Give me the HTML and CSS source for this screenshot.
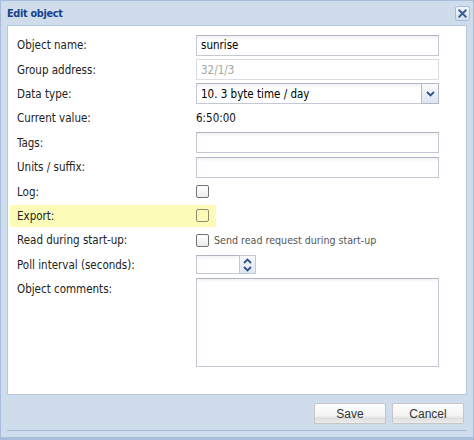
FILE: index.html
```html
<!DOCTYPE html>
<html>
<head>
<meta charset="utf-8">
<link rel="stylesheet" href="styles.css">
</head>
<body>
<div class="window">
  <div class="header">
    <span class="title">Edit object</span>
    <span class="close">
      <svg width="15" height="15" viewBox="0 0 15 15">
        <defs>
          <linearGradient id="cg" x1="0" y1="0" x2="0" y2="1">
            <stop offset="0" stop-color="#f4f8fd"/>
            <stop offset="1" stop-color="#d3e0f0"/>
          </linearGradient>
        </defs>
        <rect x="0.5" y="0.5" width="14" height="14" rx="2" fill="url(#cg)" stroke="#a3bad8"/>
        <path d="M4.2 4.2 L10.8 10.8 M10.8 4.2 L4.2 10.8" stroke="#3d5f8f" stroke-width="2" stroke-linecap="round"/>
      </svg>
    </span>
  </div>
  <div class="body">
    <div class="row">
      <span class="label">Object name:</span>
      <span class="input">sunrise</span>
    </div>
    <div class="row">
      <span class="label">Group address:</span>
      <span class="input disabled">32/1/3</span>
    </div>
    <div class="row">
      <span class="label">Data type:</span>
      <span class="input select">10. 3 byte time / day
        <span class="trigger">
          <svg width="9" height="6" viewBox="0 0 9 6"><path d="M1 1 L4.5 4.5 L8 1" fill="none" stroke="#2f5386" stroke-width="1.8"/></svg>
        </span>
      </span>
    </div>
    <div class="row">
      <span class="label">Current value:</span>
      <span class="value">6:50:00</span>
    </div>
    <div class="row">
      <span class="label">Tags:</span>
      <span class="input"></span>
    </div>
    <div class="row">
      <span class="label">Units / suffix:</span>
      <span class="input"></span>
    </div>
    <div class="row">
      <span class="label">Log:</span>
      <span class="check"></span>
    </div>
    <div class="row">
      <div class="hl">
        <span class="label">Export:</span>
        <span class="check clear"></span>
      </div>
    </div>
    <div class="row">
      <span class="label">Read during start-up:</span>
      <span class="check"></span>
      <span class="boxlabel">Send read request during start-up</span>
    </div>
    <div class="row">
      <span class="label">Poll interval (seconds):</span>
      <span class="input spin">
        <span class="spintrig">
          <svg width="9" height="16" viewBox="0 0 9 16"><path d="M1 6 L4.5 2.5 L8 6" fill="none" stroke="#2f5386" stroke-width="1.8"/><path d="M1 10 L4.5 13.5 L8 10" fill="none" stroke="#2f5386" stroke-width="1.8"/></svg>
        </span>
      </span>
    </div>
    <div class="row tall">
      <span class="label">Object comments:</span>
      <span class="textarea"></span>
    </div>
  </div>
  <div class="footer">
    <span class="btn">Save</span>
    <span class="btn">Cancel</span>
  </div>
</div>
</body>
</html>
```
FILE: styles.css
```css
html, body {
  margin: 0;
  padding: 0;
  background: #cfdbea;
}
.window {
  width: 474px;
  height: 440px;
  box-sizing: border-box;
  background: #cfdcec;
  border: 1px solid #a7bdd9;
  border-bottom-width: 3px;
  padding: 0 6px 6px 6px;
  display: flex;
  flex-direction: column;
  font-family: "DejaVu Sans Condensed", "DejaVu Sans", sans-serif;
  font-size: 11.5px;
  color: #222;
}
.header {
  height: 24px;
  display: flex;
  align-items: center;
  justify-content: space-between;
}
.title {
  font-weight: bold;
  color: #15428b;
  font-size: 10.8px;
  letter-spacing: -0.3px;
}
.close {
  display: flex;
  margin-right: -3px;
}
.body {
  height: 370px;
  box-sizing: border-box;
  background: #fff;
  border: 1px solid #b6c8de;
  padding: 7px 0 0 9px;
}
.row {
  height: 24.4px;
  display: flex;
  align-items: center;
}
.row.tall {
  height: 90px;
  align-items: flex-start;
  padding-top: 1px;
}
.row.tall .label {
  padding-top: 4px;
}
.label {
  width: 179px;
  flex: none;
}
.input {
  position: relative;
  width: 243px;
  height: 21px;
  box-sizing: border-box;
  border: 1px solid #c4c8d2;
  border-top-color: #b0b4c0;
  background: linear-gradient(#f2f2f2, #fff 4px);
  color: #000;
  padding: 0 4px;
  display: flex;
  align-items: center;
}
.input.disabled {
  color: #a4a4a4;
  border-color: #dadce2;
  background: #fff;
}
.select {
  padding-right: 22px;
}
.trigger {
  position: absolute;
  right: -1px;
  top: -1px;
  width: 18px;
  height: 21px;
  box-sizing: border-box;
  border: 1px solid #b5bac6;
  background: linear-gradient(#f8fafd, #dce5f0);
  display: flex;
  align-items: center;
  justify-content: center;
}
.value {
  color: #111;
}
.check {
  width: 13px;
  height: 13px;
  box-sizing: border-box;
  border: 1px solid #737373;
  border-radius: 2px;
  background: linear-gradient(#fff, #ececec);
  flex: none;
}
.check.clear {
  border-color: #8e8e6c;
  background: transparent;
}
.hl {
  display: flex;
  align-items: center;
  margin-left: -7px;
  padding-left: 7px;
  width: 206px;
  box-sizing: border-box;
  height: 22px;
  background: #fcfcb8;
}
.boxlabel {
  margin-left: 5px;
  color: #555;
  font-size: 10.6px;
}
.spin {
  width: 60px;
  height: 19px;
}
.spintrig {
  position: absolute;
  right: -1px;
  top: -1px;
  width: 17px;
  height: 19px;
  box-sizing: border-box;
  border: 1px solid #c4c8d2;
  background: linear-gradient(#f7f9fc, #dde5ef);
  display: flex;
  align-items: center;
  justify-content: center;
}
.textarea {
  width: 243px;
  height: 89px;
  box-sizing: border-box;
  border: 1px solid #c4c8d2;
  border-top-color: #b0b4c0;
  background: linear-gradient(#f2f2f2, #fff 4px);
}
.footer {
  flex: 1;
  display: flex;
  justify-content: flex-end;
  align-items: flex-start;
  padding-top: 8px;
  padding-right: 3px;
  gap: 6px;
  border-bottom: 1px solid #a9bdd6;
}
.btn {
  width: 72px;
  height: 21px;
  box-sizing: border-box;
  border: 1px solid #c6c6c6;
  border-radius: 2px;
  background: linear-gradient(#fdfdfd 0%, #f4f4f4 60%, #dedede 75%, #ececec 100%);
  display: flex;
  align-items: center;
  justify-content: center;
  font-family: "Liberation Sans", Arial, sans-serif;
  font-size: 12px;
  color: #333;
}
```
